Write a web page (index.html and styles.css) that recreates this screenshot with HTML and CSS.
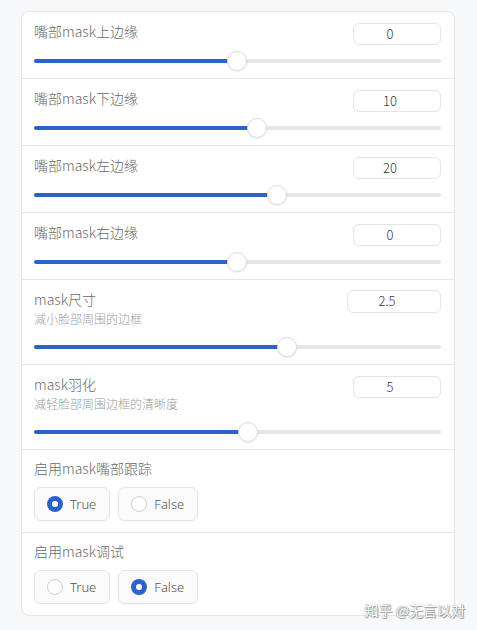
FILE: index.html
```html
<!DOCTYPE html>
<html lang="zh-CN">
<head>
<meta charset="utf-8">
<title>mask settings</title>
<link rel="stylesheet" href="styles.css">
</head>
<body>
<div class="page">
  <div class="card">
    <div class="row slider-row">
      <div class="head">
        <div class="labels"><div class="label">嘴部mask上边缘</div></div>
        <div class="num">0</div>
      </div>
      <div class="slider">
        <div class="fill" style="width:203px"></div><div class="rest"></div>
        <div class="thumb" style="left:203px"></div>
      </div>
    </div>
    <div class="row slider-row">
      <div class="head">
        <div class="labels"><div class="label">嘴部mask下边缘</div></div>
        <div class="num">10</div>
      </div>
      <div class="slider">
        <div class="fill" style="width:223px"></div><div class="rest"></div>
        <div class="thumb" style="left:223px"></div>
      </div>
    </div>
    <div class="row slider-row">
      <div class="head">
        <div class="labels"><div class="label">嘴部mask左边缘</div></div>
        <div class="num">20</div>
      </div>
      <div class="slider">
        <div class="fill" style="width:243px"></div><div class="rest"></div>
        <div class="thumb" style="left:243px"></div>
      </div>
    </div>
    <div class="row slider-row">
      <div class="head">
        <div class="labels"><div class="label">嘴部mask右边缘</div></div>
        <div class="num">0</div>
      </div>
      <div class="slider">
        <div class="fill" style="width:203px"></div><div class="rest"></div>
        <div class="thumb" style="left:203px"></div>
      </div>
    </div>
    <div class="row slider-row">
      <div class="head">
        <div class="labels">
          <div class="label">mask尺寸</div>
          <div class="sub">减小脸部周围的边框</div>
        </div>
        <div class="num wide">2.5</div>
      </div>
      <div class="slider tall">
        <div class="fill" style="width:253px"></div><div class="rest"></div>
        <div class="thumb" style="left:253px"></div>
      </div>
    </div>
    <div class="row slider-row">
      <div class="head">
        <div class="labels">
          <div class="label">mask羽化</div>
          <div class="sub">减轻脸部周围边框的清晰度</div>
        </div>
        <div class="num">5</div>
      </div>
      <div class="slider tall">
        <div class="fill" style="width:214px"></div><div class="rest"></div>
        <div class="thumb" style="left:214px"></div>
      </div>
    </div>
    <div class="row radio-row">
      <div class="label">启用mask嘴部跟踪</div>
      <div class="options">
        <div class="option"><span class="dot checked"></span><span class="opt-text">True</span></div>
        <div class="option"><span class="dot"></span><span class="opt-text">False</span></div>
      </div>
    </div>
    <div class="row radio-row">
      <div class="label">启用mask调试</div>
      <div class="options">
        <div class="option"><span class="dot"></span><span class="opt-text">True</span></div>
        <div class="option"><span class="dot checked"></span><span class="opt-text">False</span></div>
      </div>
    </div>
  </div>
  <div class="watermark">知乎 @无言以对</div>
</div>
</body>
</html>
```
FILE: styles.css
```css
* { box-sizing: border-box; }
html, body { margin: 0; padding: 0; }
body {
  background: #f7f8fa;
  font-family: "Noto Sans CJK SC", "Noto Sans", sans-serif;
  width: 477px;
  height: 630px;
  overflow: hidden;
}
.page {
  position: relative;
  padding: 11px 0 0 21px;
  height: 630px;
}
.card {
  width: 434px;
  background: #ffffff;
  border: 1px solid #e4e6ea;
  border-radius: 8px;
  display: flex;
  flex-direction: column;
}
.row {
  padding: 9px 13px 7px 12px;
  border-top: 1px solid #e6e7ea;
}
.row:first-child { border-top: none; }
.head {
  display: flex;
  justify-content: space-between;
  align-items: flex-start;
}
.labels { display: flex; flex-direction: column; }
.label {
  font-size: 14px;
  line-height: 20px;
  font-weight: 300;
  color: #6a6a6a;
}
.sub {
  font-size: 12px;
  line-height: 20px;
  font-weight: 300;
  color: #9c9c9c;
}
.num {
  width: 88px;
  height: 22px;
  margin-top: 2px;
  padding-right: 14px;
  border: 1px solid #e3e4e7;
  border-radius: 6px;
  font-family: "Noto Sans CJK SC", sans-serif;
  font-size: 13px;
  font-weight: 300;
  line-height: 20px;
  color: #3a3a3a;
  text-align: center;
}
.num.wide { width: 94px; height: 23px; margin-top: 1px; }
.slider {
  position: relative;
  height: 20px;
  margin-top: 6px;
  display: flex;
  align-items: center;
}
.slider.tall { margin-top: 8px; }
.fill {
  height: 4px;
  background: #2c62c9;
  border-radius: 2px 0 0 2px;
}
.rest {
  flex: 1;
  height: 4px;
  background: #e6e6e6;
  border-radius: 0 2px 2px 0;
}
.thumb {
  position: absolute;
  top: 0;
  width: 20px;
  height: 20px;
  margin-left: -10px;
  border-radius: 50%;
  background: #ffffff;
  border: 1px solid #dcdcdc;
  box-shadow: 0 1px 2px rgba(0,0,0,0.08);
}
.radio-row {
  padding: 8px 13px 11px 12px;
}
.options {
  display: flex;
  gap: 8px;
  margin-top: 9px;
}
.option {
  height: 34px;
  display: flex;
  align-items: center;
  gap: 7px;
  padding: 0 13px 0 12px;
  background: #fbfbfc;
  border: 1px solid #e4e5e8;
  border-radius: 7px;
  box-shadow: 0 1px 2px rgba(0,0,0,0.04);
}
.dot {
  width: 16px;
  height: 16px;
  border-radius: 50%;
  border: 1px solid #cfcfd2;
  background: #ffffff;
}
.dot.checked {
  border: 5px solid #2c62c9;
  background: #ffffff;
}
.opt-text {
  font-family: "Noto Sans", sans-serif;
  font-size: 13px;
  font-weight: 300;
  color: #555555;
}
.watermark {
  position: absolute;
  right: 12px;
  top: 601px;
  font-size: 14px;
  line-height: 18px;
  color: #ffffff;
  text-shadow: 0 0 1px #8a8a8a, 0 0 1px #8a8a8a, 1px 1px 1px #9a9a9a;
}
```
